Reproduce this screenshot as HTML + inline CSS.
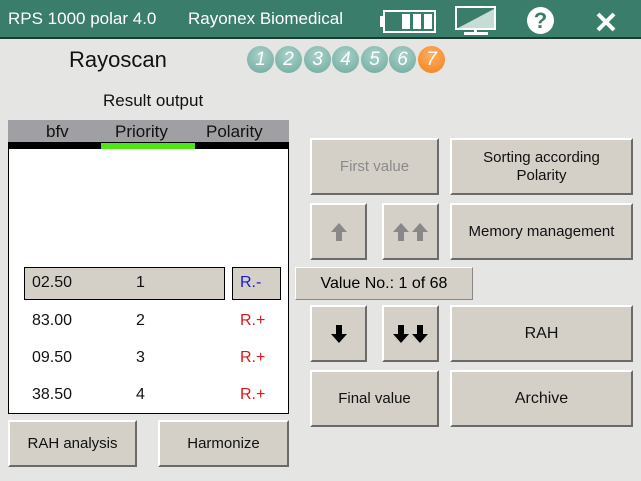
<!DOCTYPE html>
<html><head><style>
*{box-sizing:border-box;margin:0;padding:0}
body{width:641px;height:481px;background:#e5e6e4;font-family:"Liberation Sans",Arial,sans-serif;position:relative;overflow:hidden}
.a{position:absolute}
.tb{left:0;top:0;width:641px;height:39px;background:#3b7d6b;border-bottom:2px solid #1d3a32;color:#fff;font-size:17px}
.btn{position:absolute;background:#d4d0c8;border-top:2px solid #fff;border-left:2px solid #fff;border-right:2px solid #6a6a6a;border-bottom:2px solid #6a6a6a;display:flex;align-items:center;justify-content:center;text-align:center;font-size:15px;color:#111;line-height:18px}
.c{position:absolute;top:46px;width:27px;height:27px;border-radius:50%;background:radial-gradient(circle at 50% 35%,#a9d3cb,#6fa79c);color:#fff;font-style:italic;font-size:19px;text-align:center;line-height:27px}
.t{position:absolute;font-size:16px;color:#111}
</style></head><body>
<div class="a tb">
 <div class="a" style="left:8px;top:9px">RPS 1000 polar 4.0</div>
 <div class="a" style="left:188px;top:9px">Rayonex Biomedical</div>
 <div class="a" style="left:383px;top:10px;width:53px;height:23px;border:2px solid #fff"></div>
 <div class="a" style="left:380px;top:16px;width:4px;height:11px;background:#fff"></div>
 <div class="a" style="left:402px;top:14px;width:8px;height:15px;background:#fff"></div>
 <div class="a" style="left:413px;top:14px;width:8px;height:15px;background:#fff"></div>
 <div class="a" style="left:424px;top:14px;width:8px;height:15px;background:#fff"></div>
 <svg class="a" style="left:455px;top:6px" width="42" height="30"><rect x="1" y="1" width="39" height="22" fill="none" stroke="#fff" stroke-width="2"/><polygon points="3,22 39,3 39,22" fill="#c8dcd6"/><rect x="9" y="26" width="24" height="3" fill="#fff"/><rect x="19" y="23" width="3" height="4" fill="#fff"/></svg>
 <div class="a" style="left:527px;top:7px;width:27px;height:27px;border-radius:50%;background:#fff;color:#3b7d6b;font-weight:bold;font-size:22px;text-align:center;line-height:27px">?</div>
 <svg class="a" style="left:595px;top:11px" width="22" height="22"><path d="M3 3L19 19M19 3L3 19" stroke="#fff" stroke-width="4"/></svg>
</div>
<div class="t" style="left:69px;top:47px;font-size:22px">Rayoscan</div>
<div class="c" style="left:247px">1</div><div class="c" style="left:275px">2</div><div class="c" style="left:304px">3</div><div class="c" style="left:332px">4</div><div class="c" style="left:361px">5</div><div class="c" style="left:389px">6</div>
<div class="c" style="left:418px;background:radial-gradient(circle at 50% 35%,#ffb060,#f07f20)">7</div>
<div class="t" style="left:103px;top:91px;font-size:17px">Result output</div>
<div class="a" style="left:8px;top:120px;width:281px;height:22px;background:#a0a0a4"></div>
<div class="t" style="left:46px;top:122px;font-size:17px">bfv</div>
<div class="t" style="left:115px;top:122px;font-size:17px">Priority</div>
<div class="t" style="left:206px;top:122px;font-size:17px">Polarity</div>
<div class="a" style="left:8px;top:142px;width:281px;height:7px;background:#000"></div>
<div class="a" style="left:101px;top:143px;width:94px;height:6px;background:#4ee61a"></div>
<div class="a" style="left:8px;top:149px;width:281px;height:265px;background:#fff;border:1px solid #000;border-top:none"></div>
<div class="a" style="left:24px;top:267px;width:201px;height:33px;background:#d4d0c8;border:1px solid #000"></div>
<div class="a" style="left:232px;top:267px;width:49px;height:33px;background:#d4d0c8;border:1px solid #000"></div>
<div class="t" style="left:32px;top:274px">02.50</div><div class="t" style="left:136px;top:274px">1</div><div class="t" style="left:240px;top:274px;color:#1a1acc">R.-</div>
<div class="t" style="left:32px;top:312px">83.00</div><div class="t" style="left:136px;top:312px">2</div><div class="t" style="left:240px;top:312px;color:#d81a1a">R.+</div>
<div class="t" style="left:32px;top:349px">09.50</div><div class="t" style="left:136px;top:349px">3</div><div class="t" style="left:240px;top:349px;color:#d81a1a">R.+</div>
<div class="t" style="left:32px;top:386px">38.50</div><div class="t" style="left:136px;top:386px">4</div><div class="t" style="left:240px;top:386px;color:#d81a1a">R.+</div>
<div class="btn" style="left:8px;top:420px;width:129px;height:47px">RAH analysis</div>
<div class="btn" style="left:158px;top:420px;width:131px;height:47px">Harmonize</div>
<div class="btn" style="left:310px;top:138px;width:129px;height:57px;color:#8a8a8a">First value</div>
<div class="btn" style="left:450px;top:138px;width:183px;height:57px">Sorting according<br>Polarity</div>
<div class="btn" style="left:310px;top:203px;width:57px;height:57px"><svg width="18" height="20"><path d="M9 1L1 10H6V19H12V10H17Z" fill="#888"/></svg></div>
<div class="btn" style="left:382px;top:203px;width:57px;height:57px"><svg width="38" height="20"><path d="M9 1L1 10H6V19H12V10H17Z M28 1L20 10H25V19H31V10H36Z" fill="#888"/></svg></div>
<div class="btn" style="left:450px;top:203px;width:183px;height:57px">Memory management</div>
<div class="a" style="left:295px;top:267px;width:178px;height:33px;background:#d4d0c8;border:1px solid #fff;border-right-color:#888;border-bottom-color:#888;font-size:16px;text-align:center;line-height:31px">Value No.: 1 of 68</div>
<div class="btn" style="left:310px;top:305px;width:57px;height:57px"><svg width="18" height="20"><path d="M9 19L1 10H6V1H12V10H17Z" fill="#000"/></svg></div>
<div class="btn" style="left:382px;top:305px;width:57px;height:57px"><svg width="38" height="20"><path d="M9 19L1 10H6V1H12V10H17Z M28 19L20 10H25V1H31V10H36Z" fill="#000"/></svg></div>
<div class="btn" style="left:450px;top:305px;width:183px;height:57px;font-size:16px">RAH</div>
<div class="btn" style="left:310px;top:370px;width:129px;height:57px">Final value</div>
<div class="btn" style="left:450px;top:370px;width:183px;height:57px;font-size:16px">Archive</div>
</body></html>
